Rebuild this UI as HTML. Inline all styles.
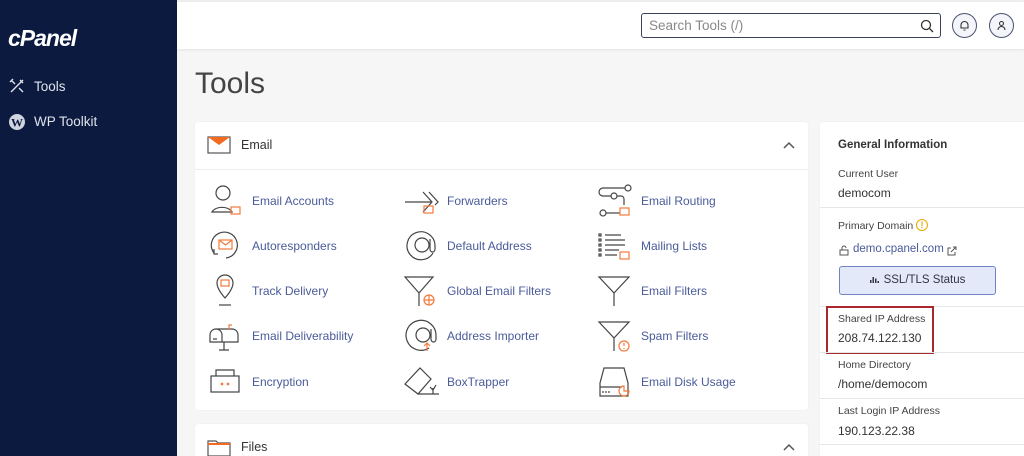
<!DOCTYPE html>
<html><head><meta charset="utf-8"><style>
*{margin:0;padding:0;box-sizing:border-box}
html,body{width:1024px;height:456px;overflow:hidden}
body{background:#f6f6f6;font-family:"Liberation Sans",sans-serif;position:relative}
.side{position:absolute;left:0;top:0;width:177px;height:456px;background:#0b1a3e;color:#e8ebf2}
.logo{position:absolute;left:8px;top:25px;font:italic bold 23px "Liberation Sans",sans-serif;color:#fff;letter-spacing:-1px}
.nav{position:absolute;left:34px;font-size:13.5px;color:#dfe3ec}
.top{position:absolute;left:177px;top:2px;right:0;height:47px;background:#fff;box-shadow:0 1px 3px rgba(0,0,0,.08)}
.topline{position:absolute;left:177px;top:0;right:0;height:2px;background:#eee}
.search{position:absolute;left:641px;top:13px;width:300px;height:25px;border:1px solid #3a4256;border-radius:3px;font-size:13.5px;color:#888;padding:4px 7px}
.circ{position:absolute;top:13px;width:25px;height:25px;border:1px solid #4a5170;border-radius:50%;background:#f4f5fa}
h1{position:absolute;left:195px;top:67px;font-weight:normal;font-size:30px;color:#444}
.card{position:absolute;background:#fff;border-radius:3px;box-shadow:0 0 2px rgba(0,0,0,.05)}
.hd{position:absolute;font-size:12.5px;color:#333}
.it{position:absolute;font-size:12px;color:#4a5b9a}
.ic{position:absolute;width:36px;height:36px}
.lbl{position:absolute;left:838px;font-size:10.5px;color:#444}
.val{position:absolute;left:838px;font-size:12px;color:#333}
.dv{position:absolute;left:820px;right:0;height:1px;background:#e6e6e6}
</style></head><body>
<div class="side">
<div class="logo">cPanel</div>
<svg style="position:absolute;left:9px;top:78px" width="16" height="16" viewBox="0 0 16 16" fill="none" stroke="#dfe3ec" stroke-width="1.4"><path d="M2 14L14 2M11 2l3 3M2 2l4 4M10 10l4 4M1 4l3-3"/></svg>
<div class="nav" style="top:79px">Tools</div>
<svg style="position:absolute;left:8px;top:113px" width="18" height="18" viewBox="0 0 18 18"><circle cx="9" cy="9" r="8" fill="#cfd4de"/><text x="9" y="13.5" font-size="12" font-weight="bold" text-anchor="middle" fill="#0b1a3e" font-family="Liberation Serif">W</text></svg>
<div class="nav" style="top:114px">WP Toolkit</div>
</div>
<div class="topline"></div>
<div class="top"></div>
<div class="search">Search Tools (/)</div>
<svg style="position:absolute;left:920px;top:19px" width="14" height="14" viewBox="0 0 14 14" fill="none" stroke="#333" stroke-width="1.3"><circle cx="6" cy="6" r="4.5"/><path d="M9.5 9.5L13 13"/></svg>
<div class="circ" style="left:952px"></div>
<svg style="position:absolute;left:958px;top:19px" width="13" height="13" viewBox="0 0 13 13" fill="none" stroke="#333" stroke-width="1.1"><path d="M3 9V6a3.5 3.5 0 017 0v3H3zM5.5 11h2"/></svg>
<div class="circ" style="left:989px"></div>
<svg style="position:absolute;left:995px;top:19px" width="13" height="13" viewBox="0 0 13 13" fill="none" stroke="#333" stroke-width="1.1"><circle cx="6.5" cy="4.5" r="2"/><path d="M3 11a3.5 3.5 0 017 0"/></svg>
<h1>Tools</h1>

<div class="card" style="left:195px;top:122px;width:613px;height:288px"></div>
<div style="position:absolute;left:195px;top:169px;width:613px;height:1px;background:#eee"></div>
<svg style="position:absolute;left:207px;top:136px" width="24" height="18" viewBox="0 0 24 18"><rect x="1" y="1" width="22" height="16" fill="#fff" stroke="#555" stroke-width="1.2"/><path d="M1 1h22L12 9z" fill="#f26b21"/></svg>
<div class="hd" style="left:241px;top:138px">Email</div>
<svg style="position:absolute;left:783px;top:141px" width="12" height="8" viewBox="0 0 12 8" fill="none" stroke="#555" stroke-width="1.5"><path d="M1 7l5-5 5 5"/></svg>

<svg class="ic" style="left:208px;top:182px" viewBox="0 0 36 36" fill="none" stroke="#444" stroke-width="1.2"><circle cx="15" cy="11" r="7"/><path d="M4 30a11 8 0 0120 0H4z"/><rect x="23" y="25" width="9" height="7" stroke="#f47a3c"/></svg>
<div class="it" style="left:252px;top:194px">Email Accounts</div>
<svg class="ic" style="left:208px;top:227px" viewBox="0 0 36 36" fill="none" stroke="#444" stroke-width="1.2"><path d="M6 26A13 13 0 1118 31"/><path d="M6 22v5h4"/><rect x="11" y="13" width="13" height="9" stroke="#f47a3c"/><path d="M11 13l6.5 5 6.5-5" stroke="#f47a3c"/></svg>
<div class="it" style="left:252px;top:239px">Autoresponders</div>
<svg class="ic" style="left:208px;top:272px" viewBox="0 0 36 36" fill="none" stroke="#444" stroke-width="1.2"><path d="M17 26C10 18 9 14 9 11a8 8 0 0116 0c0 3-1 7-8 15z"/><path d="M11 33h12"/><rect x="13" y="8" width="8" height="6" stroke="#f47a3c"/></svg>
<div class="it" style="left:252px;top:284px">Track Delivery</div>
<svg class="ic" style="left:208px;top:317px" viewBox="0 0 36 36" fill="none" stroke="#444" stroke-width="1.2"><path d="M2 18a6 6 0 0112 0v7H2zM8 12h16a6 6 0 016 6v7H14M16 25v8M11 33h10M5 22h4"/><path d="M21 13V8h3" stroke="#f47a3c"/></svg>
<div class="it" style="left:252px;top:329px">Email Deliverability</div>
<svg class="ic" style="left:208px;top:363px" viewBox="0 0 36 36" fill="none" stroke="#444" stroke-width="1.2"><rect x="3" y="13" width="28" height="16"/><path d="M8 13V7h18v6"/><circle cx="14" cy="21" r=".8" fill="#f47a3c" stroke="#f47a3c"/><circle cx="20" cy="21" r=".8" fill="#f47a3c" stroke="#f47a3c"/></svg>
<div class="it" style="left:252px;top:375px">Encryption</div>

<svg class="ic" style="left:403px;top:182px" viewBox="0 0 36 36" fill="none" stroke="#444" stroke-width="1.2"><path d="M2 20h26M20 10l9 10-9 10M26 10l9 10-3 3"/><rect x="21" y="24" width="9" height="7" stroke="#f47a3c"/></svg>
<div class="it" style="left:447px;top:194px">Forwarders</div>
<svg class="ic" style="left:403px;top:227px" viewBox="0 0 36 36" fill="none" stroke="#444" stroke-width="1.2"><path d="M30 26A14 14 0 1132 18v4c0 4-5 4-5 0V12"/><circle cx="19" cy="18" r="7"/></svg>
<div class="it" style="left:447px;top:239px">Default Address</div>
<svg class="ic" style="left:403px;top:272px" viewBox="0 0 36 36" fill="none" stroke="#444" stroke-width="1.2"><path d="M2 5h28L16 21zM16 21v13"/><circle cx="26" cy="28" r="5" stroke="#f47a3c"/><path d="M21 28h10M26 23v10" stroke="#f47a3c"/></svg>
<div class="it" style="left:447px;top:284px">Global Email Filters</div>
<svg class="ic" style="left:403px;top:317px" viewBox="0 0 36 36" fill="none" stroke="#444" stroke-width="1.2"><path d="M26 31A15 15 0 1133 18v4c0 4-5 4-5 0V12"/><circle cx="20" cy="18" r="7"/><path d="M24 34v-8M21 29l3-3 3 3" stroke="#f47a3c"/></svg>
<div class="it" style="left:447px;top:329px">Address Importer</div>
<svg class="ic" style="left:403px;top:363px" viewBox="0 0 36 36" fill="none" stroke="#444" stroke-width="1.2"><path d="M2 21L17 5l11 11-13 15zM15 31h21M30 25v6M27 24l3 3 3-5"/></svg>
<div class="it" style="left:447px;top:375px">BoxTrapper</div>

<svg class="ic" style="left:597px;top:182px" viewBox="0 0 36 36" fill="none" stroke="#444" stroke-width="1.2"><circle cx="31" cy="6" r="3"/><path d="M28 6H6a3 3 0 000 8h8"/><circle cx="17" cy="14" r="3"/><path d="M20 14h4a3 3 0 013 3v6"/><circle cx="6" cy="31" r="3"/><path d="M9 31h14"/><rect x="23" y="26" width="9" height="7" stroke="#f47a3c"/></svg>
<div class="it" style="left:641px;top:194px">Email Routing</div>
<svg class="ic" style="left:597px;top:227px" viewBox="0 0 36 36" fill="none" stroke="#444" stroke-width="1.2"><path d="M8 8h16M8 13h20M8 18h20M8 23h14M8 28h12"/><rect x="2" y="7" width="2" height="2"/><rect x="2" y="12" width="2" height="2"/><rect x="2" y="17" width="2" height="2"/><rect x="2" y="22" width="2" height="2"/><rect x="2" y="27" width="2" height="2"/><rect x="23" y="25" width="9" height="7" stroke="#f47a3c"/></svg>
<div class="it" style="left:641px;top:239px">Mailing Lists</div>
<svg class="ic" style="left:597px;top:272px" viewBox="0 0 36 36" fill="none" stroke="#444" stroke-width="1.2"><path d="M2 5h30L17 21zM17 21v13"/></svg>
<div class="it" style="left:641px;top:284px">Email Filters</div>
<svg class="ic" style="left:597px;top:317px" viewBox="0 0 36 36" fill="none" stroke="#444" stroke-width="1.2"><path d="M2 5h30L17 21zM17 21v13"/><circle cx="27" cy="29" r="5" stroke="#f47a3c"/><path d="M27 26v3M27 31v1" stroke="#f47a3c"/></svg>
<div class="it" style="left:641px;top:329px">Spam Filters</div>
<svg class="ic" style="left:597px;top:363px" viewBox="0 0 36 36" fill="none" stroke="#444" stroke-width="1.2"><path d="M3 33V20L7 5h20l4 15v13zM3 24h22M6 28v2M9 28v2M12 28v2"/><path d="M27 23a5 5 0 105 5h-5z" stroke="#f47a3c"/></svg>
<div class="it" style="left:641px;top:375px">Email Disk Usage</div>

<div class="card" style="left:195px;top:424px;width:613px;height:40px"></div>
<svg style="position:absolute;left:207px;top:438px" width="24" height="18" viewBox="0 0 24 18"><path d="M1 3h8l2 2h12v13H1z" fill="#fff" stroke="#555" stroke-width="1.2"/><path d="M1 6h22" stroke="#f26b21" stroke-width="2"/></svg>
<div class="hd" style="left:241px;top:440px">Files</div>
<svg style="position:absolute;left:783px;top:443px" width="12" height="8" viewBox="0 0 12 8" fill="none" stroke="#555" stroke-width="1.5"><path d="M1 7l5-5 5 5"/></svg>

<div class="card" style="left:820px;top:122px;width:210px;height:340px"></div>
<div style="position:absolute;left:838px;top:139px;font-size:11.5px;font-weight:bold;color:#333">General Information</div>
<div class="lbl" style="top:168px">Current User</div>
<div class="val" style="top:186px">democom</div>
<div class="dv" style="top:207px"></div>
<div class="lbl" style="top:220px">Primary Domain</div>
<div style="position:absolute;left:916px;top:219px;width:12px;height:12px;border:1.3px solid #e8a800;border-radius:50%;font-size:9px;color:#e8a800;text-align:center;line-height:10px;font-weight:bold">!</div>
<svg style="position:absolute;left:839px;top:245px" width="10" height="11" viewBox="0 0 10 11" fill="none" stroke="#555" stroke-width="1"><rect x="1" y="5" width="8" height="5"/><path d="M3 5V3a2 2 0 014 0"/></svg>
<div class="val" style="left:853px;top:243px;color:#4a5b9a;font-size:11.5px">demo.cpanel.com</div>
<svg style="position:absolute;left:947px;top:246px" width="10" height="10" viewBox="0 0 10 10" fill="none" stroke="#555" stroke-width="1"><path d="M4 2H1v7h7V6M6 1h3v3M9 1L4 6"/></svg>
<div style="position:absolute;left:839px;top:266px;width:157px;height:29px;border:1px solid #7083c4;border-radius:3px;background:#e3e9f8;font-size:11.5px;color:#334;text-align:center;line-height:27px"><svg width="9" height="8" viewBox="0 0 9 8" style="margin-right:5px"><path d="M0 8V5h1.5v3zM2.5 8V2H4v6zM5 8V3.5h1.5V8zM7.5 8V6H9v2z" fill="#334"/></svg>SSL/TLS Status</div>
<div class="dv" style="top:306px"></div>
<div class="lbl" style="top:313px">Shared IP Address</div>
<div class="val" style="top:331px">208.74.122.130</div>
<div style="position:absolute;left:826px;top:306px;width:108px;height:48px;border:2px solid #a8282e"></div>
<div class="dv" style="top:352px"></div>
<div class="lbl" style="top:359px">Home Directory</div>
<div class="val" style="top:377px">/home/democom</div>
<div class="dv" style="top:398px"></div>
<div class="lbl" style="top:405px">Last Login IP Address</div>
<div class="val" style="top:424px">190.123.22.38</div>
<div class="dv" style="top:444px"></div>
</body></html>
